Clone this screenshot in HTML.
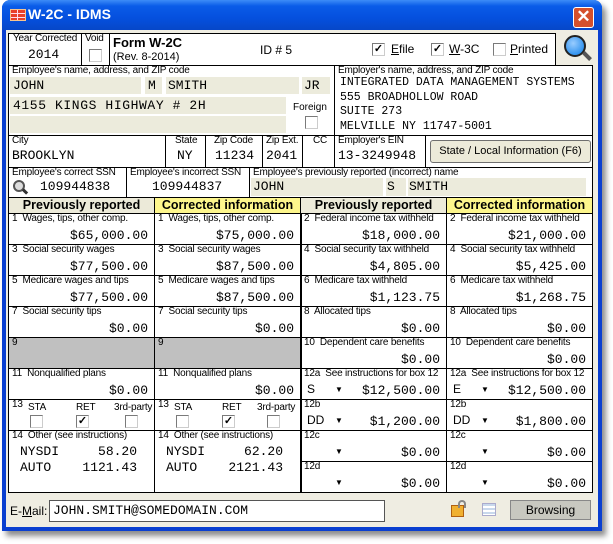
<!DOCTYPE html>
<html><head><meta charset="utf-8"><style>
*{box-sizing:border-box;margin:0;padding:0}
body{width:613px;height:544px;background:#fff;position:relative;overflow:hidden;font-family:"Liberation Sans",sans-serif}
.a{position:absolute}
.win{left:2px;top:0;width:600px;height:531px;background:#0a3fd0;border-radius:8px 8px 0 0;box-shadow:4px 5px 6px rgba(0,0,0,.45)}
.tb{left:2px;top:0;width:600px;height:30px;border-radius:8px 8px 0 0;background:linear-gradient(#3d8cf7,#0a5ce8 20%,#0550de 60%,#0647c8)}
.client{left:6px;top:30px;width:592px;height:497px;background:#efede2}
.c{position:absolute;border:1px solid #000;background:#fff}
.l{position:absolute;font-size:10px;color:#000;left:3px;top:-1px;white-space:nowrap;letter-spacing:-.2px}
.m{position:absolute;font-family:"Liberation Mono",monospace;font-size:13px;white-space:pre}
.v{position:absolute;right:6px;bottom:1px;font-family:"Liberation Mono",monospace;font-size:13px;white-space:pre}
.f{position:absolute;background:#ecebdc}
.cb{position:absolute;width:13px;height:13px;border:1px solid #7a7a7a;border-right-color:#ccc;border-bottom-color:#ccc;background:#fff;font-size:11px;line-height:11px;text-align:center;font-weight:bold}
.h{position:absolute;font-weight:bold;font-size:12.5px;text-align:center;line-height:14px;border:1px solid #000}
.dd{position:absolute;font-size:8px}
</style></head><body>
<div class="a win"></div>
<div class="a tb"></div>
<div class="a" style="left:10px;top:9px;width:16px;height:12px;background:#e8402a;border:1px solid #f7c48e"></div>
<div class="a" style="left:11px;top:13px;width:14px;height:1px;background:#fde"></div>
<div class="a" style="left:11px;top:17px;width:14px;height:1px;background:#fde"></div>
<div class="a" style="left:17px;top:10px;width:1px;height:10px;background:#fde"></div>
<div class="a" style="left:28px;top:6px;color:#fff;font-weight:bold;font-size:14px">W-2C - IDMS</div>
<div class="a" style="left:573px;top:7px;width:21px;height:21px;border-radius:3px;background:#d5502c;border:1px solid #fff;color:#fff;font-size:17px;line-height:18px;text-align:center;font-weight:bold">✕</div>
<div class="a client"></div>

<div class="c" style="left:8px;top:33px;width:74px;height:33px"><div class="l" style="left:4px">Year Corrected</div><div class="m" style="left:19px;top:13px">2014</div></div>
<div class="c" style="left:81px;top:33px;width:29px;height:33px"><div class="l">Void</div><div class="cb" style="left:7px;top:15px"></div></div>
<div class="c" style="left:109px;top:33px;width:447px;height:33px">
<div class="a" style="left:3px;top:1px;font-weight:bold;font-size:13px">Form W-2C</div>
<div class="a" style="left:3px;top:17px;font-size:11px">(Rev. 8-2014)</div>
<div class="a" style="left:150px;top:9px;font-size:12px">ID # 5</div>
<div class="cb" style="left:262px;top:9px">✓</div><div class="a" style="left:281px;top:8px;font-size:12px"><u>E</u>file</div>
<div class="cb" style="left:321px;top:9px">✓</div><div class="a" style="left:339px;top:8px;font-size:12px"><u>W</u>-3C</div>
<div class="cb" style="left:383px;top:9px"></div><div class="a" style="left:400px;top:8px;font-size:12px"><u>P</u>rinted</div>
</div>
<div class="a" style="left:564px;top:35px;width:22px;height:22px;border-radius:50%;background:radial-gradient(circle at 40% 35%,#9cf,#0a7ee8);border:2px solid #222"></div>
<div class="a" style="left:582px;top:54px;width:10px;height:4px;background:#555;transform:rotate(45deg)"></div>

<div class="c" style="left:8px;top:65px;width:327px;height:71px"><div class="l">Employee's name, address, and ZIP code</div>
<div class="f" style="left:1px;top:11px;width:131px;height:17px"></div><div class="m" style="left:4px;top:12px">JOHN</div>
<div class="f" style="left:136px;top:11px;width:17px;height:17px"></div><div class="m" style="left:139px;top:12px">M</div>
<div class="f" style="left:157px;top:11px;width:133px;height:17px"></div><div class="m" style="left:159px;top:12px">SMITH</div>
<div class="f" style="left:293px;top:11px;width:28px;height:17px"></div><div class="m" style="left:295px;top:12px">JR</div>
<div class="f" style="left:1px;top:31px;width:276px;height:17px"></div><div class="m" style="left:4px;top:32px;letter-spacing:.6px">4155 KINGS HIGHWAY # 2H</div>
<div class="f" style="left:1px;top:50px;width:276px;height:17px"></div>
<div class="a" style="left:284px;top:36px;font-size:10px">Foreign</div>
<div class="cb" style="left:296px;top:50px"></div>
</div>
<div class="c" style="left:334px;top:65px;width:259px;height:71px"><div class="l">Employer's name, address, and ZIP code</div>
<div class="m" style="left:5px;top:10px;line-height:14.5px;font-size:11.5px">INTEGRATED DATA MANAGEMENT SYSTEMS
555 BROADHOLLOW ROAD
SUITE 273
MELVILLE NY 11747-5001</div></div>

<div class="c" style="left:8px;top:135px;width:158px;height:33px"><div class="l">City</div><div class="m" style="left:3px;top:12px">BROOKLYN</div></div>
<div class="c" style="left:165px;top:135px;width:41px;height:33px"><div class="l" style="left:9px">State</div><div class="m" style="left:11px;top:12px">NY</div></div>
<div class="c" style="left:205px;top:135px;width:58px;height:33px"><div class="l" style="left:8px">Zip Code</div><div class="m" style="left:9px;top:12px">11234</div></div>
<div class="c" style="left:262px;top:135px;width:41px;height:33px"><div class="l">Zip Ext.</div><div class="m" style="left:3px;top:12px">2041</div></div>
<div class="c" style="left:302px;top:135px;width:33px;height:33px"><div class="l" style="left:10px">CC</div></div>
<div class="c" style="left:334px;top:135px;width:92px;height:33px"><div class="l">Employer's EIN</div><div class="m" style="left:3px;top:12px">13-3249948</div></div>
<div class="c" style="left:425px;top:135px;width:168px;height:33px"></div>
<div class="a" style="left:430px;top:140px;width:161px;height:23px;background:#ecead9;border:1px solid #6f6f6f;border-radius:3px;font-size:11px;text-align:center;line-height:21px">State / Local Information (F6)</div>

<div class="c" style="left:8px;top:167px;width:119px;height:31px"><div class="l">Employee's correct SSN</div>
<div class="a" style="left:4px;top:12px;width:12px;height:12px;border-radius:50%;border:2px solid #555;background:#ddd"></div>
<div class="a" style="left:13px;top:22px;width:6px;height:3px;background:#333;transform:rotate(45deg)"></div>
<div class="m" style="left:31px;top:11px">109944838</div></div>
<div class="c" style="left:126px;top:167px;width:124px;height:31px"><div class="l">Employee's incorrect SSN</div><div class="m" style="left:25px;top:11px">109944837</div></div>
<div class="c" style="left:249px;top:167px;width:344px;height:31px"><div class="l">Employee's previously reported (incorrect) name</div>
<div class="f" style="left:1px;top:10px;width:132px;height:18px"></div><div class="m" style="left:3px;top:11px">JOHN</div>
<div class="f" style="left:136px;top:10px;width:20px;height:18px"></div><div class="m" style="left:137px;top:11px">S</div>
<div class="f" style="left:158px;top:10px;width:178px;height:18px"></div><div class="m" style="left:159px;top:11px">SMITH</div></div>

<div class="h" style="left:8px;top:197px;width:147px;height:17px;background:#ecead9">Previously reported</div>
<div class="h" style="left:154px;top:197px;width:147px;height:17px;background:#fdf68c">Corrected information</div>
<div class="h" style="left:300px;top:197px;width:147px;height:17px;background:#ecead9">Previously reported</div>
<div class="h" style="left:446px;top:197px;width:147px;height:17px;background:#fdf68c">Corrected information</div>

<div class="c" style="left:8px;top:213px;width:147px;height:32px"><div class="l">1&nbsp; Wages, tips, other comp.</div><div class="v">$65,000.00</div></div>
<div class="c" style="left:154px;top:213px;width:147px;height:32px"><div class="l">1&nbsp; Wages, tips, other comp.</div><div class="v">$75,000.00</div></div>
<div class="c" style="left:8px;top:244px;width:147px;height:32px"><div class="l">3&nbsp; Social security wages</div><div class="v">$77,500.00</div></div>
<div class="c" style="left:154px;top:244px;width:147px;height:32px"><div class="l">3&nbsp; Social security wages</div><div class="v">$87,500.00</div></div>
<div class="c" style="left:8px;top:275px;width:147px;height:32px"><div class="l">5&nbsp; Medicare wages and tips</div><div class="v">$77,500.00</div></div>
<div class="c" style="left:154px;top:275px;width:147px;height:32px"><div class="l">5&nbsp; Medicare wages and tips</div><div class="v">$87,500.00</div></div>
<div class="c" style="left:8px;top:306px;width:147px;height:32px"><div class="l">7&nbsp; Social security tips</div><div class="v">$0.00</div></div>
<div class="c" style="left:154px;top:306px;width:147px;height:32px"><div class="l">7&nbsp; Social security tips</div><div class="v">$0.00</div></div>
<div class="c" style="left:8px;top:337px;width:147px;height:32px;background:#c0c0c0"><div class="l">9</div></div>
<div class="c" style="left:154px;top:337px;width:147px;height:32px;background:#c0c0c0"><div class="l">9</div></div>
<div class="c" style="left:8px;top:368px;width:147px;height:32px"><div class="l">11&nbsp; Nonqualified plans</div><div class="v">$0.00</div></div>
<div class="c" style="left:154px;top:368px;width:147px;height:32px"><div class="l">11&nbsp; Nonqualified plans</div><div class="v">$0.00</div></div>
<div class="c" style="left:8px;top:399px;width:147px;height:32px"><div class="l">13<span style="position:absolute;left:16px;top:3px">STA</span><span style="position:absolute;left:64px;top:3px">RET</span><span style="position:absolute;left:102px;top:3px">3rd-party</span></div>
<div class="cb" style="left:21px;top:15px"></div><div class="cb" style="left:67px;top:15px">✓</div><div class="cb" style="left:116px;top:15px"></div></div>
<div class="c" style="left:154px;top:399px;width:147px;height:32px"><div class="l">13<span style="position:absolute;left:16px;top:3px">STA</span><span style="position:absolute;left:64px;top:3px">RET</span><span style="position:absolute;left:99px;top:3px">3rd-party</span></div>
<div class="cb" style="left:21px;top:15px"></div><div class="cb" style="left:67px;top:15px">✓</div><div class="cb" style="left:112px;top:15px"></div></div>
<div class="c" style="left:8px;top:430px;width:147px;height:63px"><div class="l">14&nbsp; Other (see instructions)</div><div class="m" style="left:11px;top:13px;line-height:16px">NYSDI     58.20
AUTO    1121.43</div></div>
<div class="c" style="left:154px;top:430px;width:147px;height:63px"><div class="l">14&nbsp; Other (see instructions)</div><div class="m" style="left:11px;top:13px;line-height:16px">NYSDI     62.20
AUTO    2121.43</div></div>

<div class="c" style="left:300px;top:213px;width:147px;height:32px"><div class="l">2&nbsp; Federal income tax withheld</div><div class="v">$18,000.00</div></div>
<div class="c" style="left:446px;top:213px;width:147px;height:32px"><div class="l">2&nbsp; Federal income tax withheld</div><div class="v">$21,000.00</div></div>
<div class="c" style="left:300px;top:244px;width:147px;height:32px"><div class="l">4&nbsp; Social security tax withheld</div><div class="v">$4,805.00</div></div>
<div class="c" style="left:446px;top:244px;width:147px;height:32px"><div class="l">4&nbsp; Social security tax withheld</div><div class="v">$5,425.00</div></div>
<div class="c" style="left:300px;top:275px;width:147px;height:32px"><div class="l">6&nbsp; Medicare tax withheld</div><div class="v">$1,123.75</div></div>
<div class="c" style="left:446px;top:275px;width:147px;height:32px"><div class="l">6&nbsp; Medicare tax withheld</div><div class="v">$1,268.75</div></div>
<div class="c" style="left:300px;top:306px;width:147px;height:32px"><div class="l">8&nbsp; Allocated tips</div><div class="v">$0.00</div></div>
<div class="c" style="left:446px;top:306px;width:147px;height:32px"><div class="l">8&nbsp; Allocated tips</div><div class="v">$0.00</div></div>
<div class="c" style="left:300px;top:337px;width:147px;height:32px"><div class="l">10&nbsp; Dependent care benefits</div><div class="v">$0.00</div></div>
<div class="c" style="left:446px;top:337px;width:147px;height:32px"><div class="l">10&nbsp; Dependent care benefits</div><div class="v">$0.00</div></div>
<div class="c" style="left:300px;top:368px;width:147px;height:32px"><div class="l">12a&nbsp; See instructions for box 12</div><div class="a" style="left:6px;top:13px;font-size:12px">S</div><div class="dd" style="left:34px;top:16px">▼</div><div class="v">$12,500.00</div></div>
<div class="c" style="left:446px;top:368px;width:147px;height:32px"><div class="l">12a&nbsp; See instructions for box 12</div><div class="a" style="left:6px;top:13px;font-size:12px">E</div><div class="dd" style="left:34px;top:16px">▼</div><div class="v">$12,500.00</div></div>
<div class="c" style="left:300px;top:399px;width:147px;height:32px"><div class="l">12b</div><div class="a" style="left:6px;top:13px;font-size:12px">DD</div><div class="dd" style="left:34px;top:16px">▼</div><div class="v">$1,200.00</div></div>
<div class="c" style="left:446px;top:399px;width:147px;height:32px"><div class="l">12b</div><div class="a" style="left:6px;top:13px;font-size:12px">DD</div><div class="dd" style="left:34px;top:16px">▼</div><div class="v">$1,800.00</div></div>
<div class="c" style="left:300px;top:430px;width:147px;height:32px"><div class="l">12c</div><div class="dd" style="left:34px;top:16px">▼</div><div class="v">$0.00</div></div>
<div class="c" style="left:446px;top:430px;width:147px;height:32px"><div class="l">12c</div><div class="dd" style="left:34px;top:16px">▼</div><div class="v">$0.00</div></div>
<div class="c" style="left:300px;top:461px;width:147px;height:32px"><div class="l">12d</div><div class="dd" style="left:34px;top:16px">▼</div><div class="v">$0.00</div></div>
<div class="c" style="left:446px;top:461px;width:147px;height:32px"><div class="l">12d</div><div class="dd" style="left:34px;top:16px">▼</div><div class="v">$0.00</div></div>
<div class="a" style="left:300px;top:213px;width:2px;height:280px;background:#000"></div>

<div class="a" style="left:10px;top:504px;font-size:12px">E-<u>M</u>ail:</div>
<div class="a" style="left:49px;top:500px;width:336px;height:22px;background:#fff;border:1px solid #555"></div>
<div class="m" style="left:53px;top:503px">JOHN.SMITH@SOMEDOMAIN.COM</div>
<div class="a" style="left:451px;top:505px;width:13px;height:12px;background:#f0b030;border:1px solid #b06010"></div>
<div class="a" style="left:458px;top:500px;width:8px;height:8px;border:2px solid #888;border-bottom:none;border-radius:4px 4px 0 0"></div>
<div class="a" style="left:482px;top:503px;width:14px;height:13px;background:repeating-linear-gradient(#c8d8ec 0 2px,#fff 2px 4px);border:1px solid #aac"></div>
<div class="a" style="left:510px;top:500px;width:81px;height:20px;background:#c8c8c0;border:1px solid #888;font-size:12px;text-align:center;line-height:18px">Browsing</div>
</body></html>
